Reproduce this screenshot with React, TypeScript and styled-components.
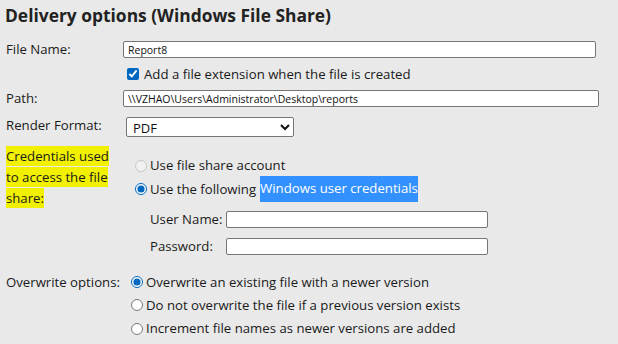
import React from "react";
import styled, { createGlobalStyle } from "styled-components";

const GlobalStyle = createGlobalStyle`
  html, body {
    margin: 0;
    padding: 0;
    background: #e9e9e9;
  }
  body {
    font-family: "Open Sans", "Noto Sans", sans-serif;
    color: #1a1a1a;
  }
`;

export default function App() {
  return (
    <>
      <GlobalStyle />
      <Page>
        <Title>Delivery options (Windows File Share)</Title>
        <Form>
          <Label>File Name:</Label>
          <Field>
            <TextBox defaultValue="Report8" $width={473} />
          </Field>

          <span />
          <Field>
            <Option>
              <Check type="checkbox" defaultChecked />
              Add a file extension when the file is created
            </Option>
          </Field>

          <Label>Path:</Label>
          <Field>
            <TextBox
              defaultValue={"\\\\VZHAO\\Users\\Administrator\\Desktop\\reports"}
              $width={476}
            />
          </Field>

          <Label>Render Format:</Label>
          <Field>
            <Select defaultValue="PDF">
              <option>PDF</option>
              <option>Excel</option>
              <option>Word</option>
            </Select>
          </Field>

          <Label $top $gap={5}>
            <Marker>Credentials used to access the file share:</Marker>
          </Label>
          <Credentials>
            <Option $muted $height={21}>
              <Radio type="radio" name="cred" disabled />
              Use file share account
            </Option>
            <Option $height={23}>
              <Radio type="radio" name="cred" defaultChecked />
              Use the following <Selected>Windows user credentials</Selected>
            </Option>
            <Login>
              <SubLabel>User Name:</SubLabel>
              <TextBox $width={262} />
              <SubLabel>Password:</SubLabel>
              <TextBox type="password" $width={262} />
            </Login>
          </Credentials>

          <Label $top $gap={13}>Overwrite options:</Label>
          <Overwrite>
            <Option $height={22}>
              <Radio type="radio" name="over" defaultChecked />
              Overwrite an existing file with a newer version
            </Option>
            <Option $height={24}>
              <Radio type="radio" name="over" />
              Do not overwrite the file if a previous version exists
            </Option>
            <Option $height={23}>
              <Radio type="radio" name="over" />
              Increment file names as newer versions are added
            </Option>
          </Overwrite>
        </Form>
      </Page>
    </>
  );
}

const Page = styled.div`
  width: 618px;
  height: 344px;
  overflow: hidden;
  padding: 3px 0 0 5px;
  box-sizing: border-box;
`;

const Title = styled.h1`
  margin: 0 0 12px;
  font-size: 17.4px;
  font-weight: 700;
  color: #222;
`;

const Form = styled.div`
  display: grid;
  grid-template-columns: 118px 1fr;
  align-items: center;
  row-gap: 4px;
  font-size: 13.2px;
`;

const Label = styled.div<{ $top?: boolean; $gap?: number }>`
  align-self: ${(p) => (p.$top ? "start" : "center")};
  padding-left: 1px;
  line-height: 21px;
  margin-top: ${(p) => p.$gap ?? 0}px;
`;

const Marker = styled.span`
  background: #f0f000;
  box-decoration-break: clone;
  -webkit-box-decoration-break: clone;
  padding: 1px 0;
`;

const Field = styled.div`
  display: flex;
  align-items: center;
`;

const TextBox = styled.input<{ $width: number }>`
  width: ${(p) => p.$width}px;
  height: 17px;
  box-sizing: border-box;
  border: 1px solid #767676;
  border-radius: 2px;
  background: #fff;
  padding: 0 4px;
  font-family: "Open Sans", sans-serif;
  font-size: 10.5px;
  color: #111;
  outline: none;
`;

const Select = styled.select`
  width: 168px;
  height: 20px;
  margin: 4px 0 0 3px;
  border: 1px solid #767676;
  border-radius: 2px;
  background: #fff;
  font-family: "Open Sans", sans-serif;
  font-size: 13px;
  color: #111;
  padding: 0 2px;
`;

const Option = styled.label<{ $muted?: boolean; $height?: number }>`
  display: flex;
  align-items: center;
  line-height: ${(p) => p.$height ?? 20}px;
  white-space: nowrap;
  color: #1a1a1a;
`;

const Check = styled.input`
  width: 12px;
  height: 12px;
  margin: 0 5px 0 4px;
  accent-color: #0067c0;
`;

const Radio = styled.input`
  width: 12px;
  height: 12px;
  margin: 0 3px 0 0;
  accent-color: #0067c0;
`;

const Credentials = styled.div`
  display: flex;
  flex-direction: column;
  padding: 14px 0 0 12px;
`;

const Selected = styled.span`
  background: #3390ff;
  color: #fff;
  margin-left: 4px;
  padding: 1px 0 2px;
`;

const Login = styled.div`
  display: grid;
  grid-template-columns: 76px auto;
  justify-content: start;
  align-items: center;
  row-gap: 9px;
  padding: 8px 0 0 15px;
`;

const SubLabel = styled.span``;

const Overwrite = styled.div`
  display: flex;
  flex-direction: column;
  padding: 12px 0 0 8px;
`;
